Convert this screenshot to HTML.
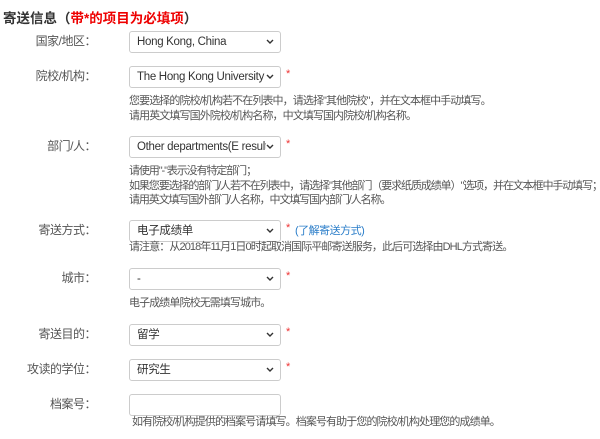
<!DOCTYPE html><html><head><meta charset="utf-8"><style>
body{margin:0;width:600px;height:439px;overflow:hidden;background:#fff;font-family:"Liberation Sans","Noto Sans CJK SC",sans-serif;font-size:12px;color:#555;position:relative}
.a{position:absolute;white-space:nowrap}
.t{left:3px;top:7px;font-size:13.5px;font-weight:bold;color:#333}
.t span{color:#e00}
.l{width:96px;left:0;text-align:right;line-height:21px;letter-spacing:-0.5px}
.s{left:129px;width:150px;height:20px;border:1px solid #ccc;border-radius:3px;line-height:20px;box-sizing:content-box;color:#333;font-size:11.5px;letter-spacing:-0.3px}
.s i{font-style:normal;position:absolute;left:7px;top:0;width:129px;overflow:hidden}
.s svg{position:absolute;right:6px;top:7px}
.r{color:#e33;font-size:11px}
.h{left:129px;line-height:14.5px;color:#555;font-size:11px;letter-spacing:-0.9px}
</style></head><body>
<div class="a t">寄送信息（<span>带*的项目为必填项</span>）</div>

<div class="a l" style="top:31px">国家/地区：</div>
<div class="a s" style="top:31px"><i>Hong Kong, China</i><svg width="8" height="6"><path d="M1 1L4 4L7 1" stroke="#333" stroke-width="1.4" fill="none"/></svg></div>

<div class="a l" style="top:66px">院校/机构：</div>
<div class="a s" style="top:66px"><i>The Hong Kong University of :</i><svg width="8" height="6"><path d="M1 1L4 4L7 1" stroke="#333" stroke-width="1.4" fill="none"/></svg></div>
<div class="a r" style="left:286px;top:68px">*</div>
<div class="a h" style="top:94px">您要选择的院校/机构若不在列表中，请选择"其他院校"，并在文本框中手动填写。<br>请用英文填写国外院校/机构名称，中文填写国内院校/机构名称。</div>

<div class="a l" style="top:136px">部门/人：</div>
<div class="a s" style="top:136px"><i>Other departments(E results r</i><svg width="8" height="6"><path d="M1 1L4 4L7 1" stroke="#333" stroke-width="1.4" fill="none"/></svg></div>
<div class="a r" style="left:286px;top:138px">*</div>
<div class="a h" style="top:164px;letter-spacing:-1.1px">请使用"-"表示没有特定部门；<br>如果您要选择的部门/人若不在列表中，请选择"其他部门（要求纸质成绩单）"选项，并在文本框中手动填写；<br>请用英文填写国外部门/人名称，中文填写国内部门/人名称。</div>

<div class="a l" style="top:220px">寄送方式：</div>
<div class="a s" style="top:220px"><i>电子成绩单</i><svg width="8" height="6"><path d="M1 1L4 4L7 1" stroke="#333" stroke-width="1.4" fill="none"/></svg></div>
<div class="a r" style="left:286px;top:222px">*</div>
<div class="a" style="left:295px;top:222px;color:#2a7dc9;font-size:11px;letter-spacing:-0.5px">(了解寄送方式)</div>
<div class="a h" style="top:240px">请注意：从2018年11月1日0时起取消国际平邮寄送服务，此后可选择由DHL方式寄送。</div>

<div class="a l" style="top:268px">城市：</div>
<div class="a s" style="top:268px"><i>-</i><svg width="8" height="6"><path d="M1 1L4 4L7 1" stroke="#333" stroke-width="1.4" fill="none"/></svg></div>
<div class="a r" style="left:286px;top:270px">*</div>
<div class="a h" style="top:296px">电子成绩单院校无需填写城市。</div>

<div class="a l" style="top:324px">寄送目的：</div>
<div class="a s" style="top:324px"><i>留学</i><svg width="8" height="6"><path d="M1 1L4 4L7 1" stroke="#333" stroke-width="1.4" fill="none"/></svg></div>
<div class="a r" style="left:286px;top:326px">*</div>

<div class="a l" style="top:359px">攻读的学位：</div>
<div class="a s" style="top:359px"><i>研究生</i><svg width="8" height="6"><path d="M1 1L4 4L7 1" stroke="#333" stroke-width="1.4" fill="none"/></svg></div>
<div class="a r" style="left:286px;top:361px">*</div>

<div class="a l" style="top:394px">档案号：</div>
<div class="a s" style="top:394px"></div>
<div class="a h" style="left:132px;top:415px">如有院校/机构提供的档案号请填写。档案号有助于您的院校/机构处理您的成绩单。</div>
</body></html>
